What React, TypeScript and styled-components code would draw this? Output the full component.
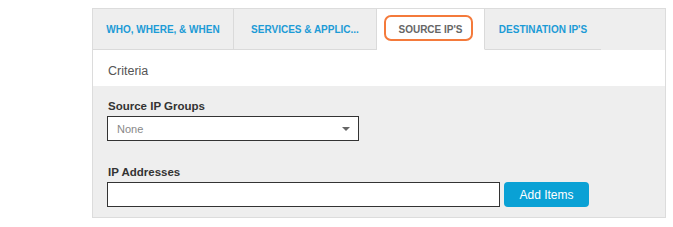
import styled, { createGlobalStyle } from "styled-components";

const GlobalStyle = createGlobalStyle`
  body {
    margin: 0;
    background: #ffffff;
    font-family: "Liberation Sans", Arial, sans-serif;
  }
`;

const Page = styled.div`
  padding: 8px 0 0 92px;
`;

const Panel = styled.div`
  width: 574px;
  box-sizing: border-box;
  border: 1px solid #dcdcdc;
  background: #eeeeee;
`;

const TabBar = styled.div`
  display: flex;
  height: 41px;
`;

interface TabProps {
  $width: number;
  $active?: boolean;
  $last?: boolean;
}

const Tab = styled.div<TabProps>`
  position: relative;
  width: ${(p) => p.$width}px;
  box-sizing: border-box;
  display: flex;
  align-items: center;
  justify-content: center;
  font-size: 10px;
  font-weight: 700;
  white-space: nowrap;
  color: ${(p) => (p.$active ? "#666666" : "#1c9bd6")};
  background: ${(p) => (p.$active ? "#ffffff" : "transparent")};
  border-bottom: 1px solid ${(p) => (p.$active ? "transparent" : "#dadada")};
  border-right: ${(p) => (p.$last ? "none" : "1px solid #dadada")};
`;

const Highlight = styled.span`
  position: absolute;
  left: 7px;
  top: 6px;
  width: 89px;
  height: 26px;
  box-sizing: border-box;
  border: 2.5px solid #f47a3b;
  border-radius: 7px;
`;

const Criteria = styled.div`
  background: #ffffff;
  height: 36px;
  box-sizing: border-box;
  padding: 14px 15px 0;
  font-size: 12.5px;
  line-height: 15px;
  color: #555555;
`;

const Body = styled.div`
  padding: 13px 14px 10px;
  display: flex;
  flex-direction: column;
`;

const Label = styled.div`
  font-size: 11.5px;
  line-height: 14px;
  font-weight: 700;
  color: #333333;
  margin-bottom: 3px;
  padding-left: 1px;
`;

const Select = styled.div`
  width: 252px;
  height: 25px;
  box-sizing: border-box;
  border: 1px solid #333333;
  background: #ffffff;
  display: flex;
  align-items: center;
  justify-content: space-between;
  padding: 0 8px 0 9px;
  font-size: 11px;
  color: #888888;
  margin-bottom: 24px;
`;

const Caret = styled.span`
  width: 0;
  height: 0;
  border-left: 4px solid transparent;
  border-right: 4px solid transparent;
  border-top: 4px solid #666666;
`;

const Row = styled.div`
  display: flex;
  gap: 4px;
`;

const Input = styled.div`
  width: 393px;
  height: 25px;
  box-sizing: border-box;
  border: 1px solid #333333;
  background: #ffffff;
`;

const Button = styled.div`
  width: 85px;
  height: 25px;
  border-radius: 4px;
  background: #0aa1d5;
  color: #ffffff;
  font-size: 12px;
  display: flex;
  align-items: center;
  justify-content: center;
`;

export default function App() {
  return (
    <>
      <GlobalStyle />
      <Page>
        <Panel>
          <TabBar>
            <Tab $width={141}>WHO, WHERE, &amp; WHEN</Tab>
            <Tab $width={143}>SERVICES &amp; APPLIC...</Tab>
            <Tab $width={108} $active>
              SOURCE IP'S
              <Highlight />
            </Tab>
            <Tab $width={116} $last>DESTINATION IP'S</Tab>
          </TabBar>
          <Criteria>Criteria</Criteria>
          <Body>
            <Label>Source IP Groups</Label>
            <Select>
              None
              <Caret />
            </Select>
            <Label>IP Addresses</Label>
            <Row>
              <Input />
              <Button>Add Items</Button>
            </Row>
          </Body>
        </Panel>
      </Page>
    </>
  );
}
